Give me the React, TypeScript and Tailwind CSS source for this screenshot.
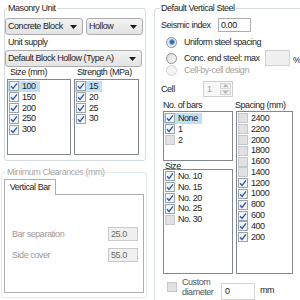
import React from "react";

const Check = ({ checked, disabled }: { checked?: boolean; disabled?: boolean }) => (
  <span
    className={`w-[10px] h-[10px] shrink-0 border flex items-center justify-center ${
      checked ? "border-[#9aa4ae] bg-[#f2f4f6]" : "border-[#c4c8cc] bg-[#e1e1e1]"
    } ${disabled ? "opacity-60" : ""}`}
  >
    {checked && (
      <svg width="8" height="8" viewBox="0 0 8 8">
        <path d="M1 4.3 L3 6.4 L7 1.3" stroke="#2c56a4" strokeWidth="1.3" fill="none" />
      </svg>
    )}
  </span>
);

const Item = ({ label, checked, sel }: { label: string; checked?: boolean; sel?: boolean }) => (
  <div className="h-[10.8px] flex items-center">
    <div className={`h-full flex items-center pl-[1px] pr-[4px] gap-[3px] ${sel ? "bg-[#bde0f7]" : ""}`}>
      <Check checked={checked} />
      <span className="leading-[11px] whitespace-nowrap">{label}</span>
    </div>
  </div>
);

const ListBox = ({ w, h, children }: { w: string; h: string; children: React.ReactNode }) => (
  <div className={`${w} ${h} border border-[#828790] bg-white pt-[1px] overflow-hidden`}>{children}</div>
);

const Combo = ({ w, label }: { w: string; label: string }) => (
  <div
    className={`${w} h-[17px] shrink-0 border border-[#acacac] rounded-[3px] bg-linear-to-b from-[#f3f3f3] to-[#e3e3e3] flex items-center justify-between pl-[2px] pr-[5px]`}
  >
    <span className="leading-[11px] whitespace-nowrap">{label}</span>
    <svg width="7" height="4" viewBox="0 0 7 4" className="shrink-0">
      <path d="M0 0 L7 0 L3.5 4 Z" fill="#1a1a1a" />
    </svg>
  </div>
);

const Radio = ({ checked, disabled }: { checked?: boolean; disabled?: boolean }) => (
  <span
    className={`w-[11px] h-[11px] shrink-0 rounded-full border flex items-center justify-center bg-linear-to-br ${
      disabled ? "border-[#d2d2d2] from-[#f0f0f0] to-[#f8f8f8]" : "border-[#8e9296] from-[#dcdcdc] to-[#f6f6f6]"
    }`}
  >
    {checked && (
      <span className="w-[6px] h-[6px] rounded-full bg-[#2566b0] border border-[#7fb1e3]" />
    )}
  </span>
);

const Legend = ({ children, cls }: { children: React.ReactNode; cls: string }) => (
  <span className={`absolute -top-[6px] bg-white px-[1px] leading-[11px] whitespace-nowrap ${cls}`}>{children}</span>
);

export default function App() {
  return (
    <div className="w-[300px] h-[300px] overflow-hidden bg-white text-[#1e1e1e] text-[9px] tracking-[-0.45px] leading-[11px] font-['Liberation_Sans',Arial,sans-serif] flex">
      {/* Left column */}
      <div className="w-[150px] shrink-0 flex flex-col pt-[8px]">
        {/* Masonry Unit */}
        <div className="relative ml-[4px] w-[142px] h-[153px] border border-[#d5dce2] rounded-[3px] flex flex-col">
          <Legend cls="left-[2px]">Masonry Unit</Legend>
          <div className="mt-[9px] flex gap-[3px]">
            <Combo w="w-[78px]" label="Concrete Block" />
            <Combo w="w-[57px]" label="Hollow" />
          </div>
          <div className="mt-[2px] pl-[3px]">Unit supply</div>
          <div className="mt-[2px]">
            <Combo w="w-[137px]" label="Default Block Hollow (Type A)" />
          </div>
          <div className="flex">
            <div className="ml-[2px] w-[64px] shrink-0 flex flex-col">
              <div className="pl-[3px]">Size (mm)</div>
              <div className="mt-[1px]">
                <ListBox w="w-[64px]" h="h-[76px]">
                  <Item label="100" checked sel />
                  <Item label="150" checked />
                  <Item label="200" checked />
                  <Item label="250" checked />
                  <Item label="300" checked />
                </ListBox>
              </div>
            </div>
            <div className="ml-[3px] w-[65px] shrink-0 flex flex-col">
              <div className="pl-[3px] whitespace-nowrap">Strength (MPa)</div>
              <div className="mt-[1px]">
                <ListBox w="w-[65px]" h="h-[76px]">
                  <Item label="15" checked sel />
                  <Item label="20" checked />
                  <Item label="25" checked />
                  <Item label="30" checked />
                </ListBox>
              </div>
            </div>
          </div>
        </div>

        {/* Minimum Clearances */}
        <div className="relative mt-[11px] ml-[1px] w-[146px] h-[126px] border border-[#e3e7ea] rounded-[3px] flex flex-col">
          <Legend cls="left-[4px] text-[#a6a6a6]">Minimum Clearances (mm)</Legend>
          <div className="mt-[6px] ml-[2px] relative z-10 w-[52px] h-[16px] border border-b-0 border-[#adadad] bg-white flex items-center justify-center">
            <span className="leading-[11px] whitespace-nowrap">Vertical Bar</span>
          </div>
          <div className="-mt-[1px] ml-[2px] w-[140px] h-[99px] border border-[#adadad] bg-white flex flex-col text-[#9a9a9a]">
            <div className="mt-[32px] h-[14px] flex items-center justify-between pl-[7px] pr-[5px]">
              <span className="whitespace-nowrap">Bar separation</span>
              <span className="w-[30px] h-[14px] shrink-0 border border-[#c9c9c9] bg-[#f0f0f0] text-[#6d6d6d] pl-[2px] flex items-center">25.0</span>
            </div>
            <div className="mt-[7px] h-[14px] flex items-center justify-between pl-[7px] pr-[5px]">
              <span className="whitespace-nowrap">Side cover</span>
              <span className="w-[30px] h-[14px] shrink-0 border border-[#c9c9c9] bg-[#f0f0f0] text-[#6d6d6d] pl-[2px] flex items-center">55.0</span>
            </div>
          </div>
        </div>
      </div>

      {/* Right column */}
      <div className="shrink-0 w-[200px] pt-[8px]">
        <div className="relative ml-[4px] w-[200px] h-[320px] border border-[#d5dce2] rounded-[3px] flex flex-col">
          <Legend cls="left-[5px]">Default Vertical Steel</Legend>
          <div className="mt-[9px] pl-[6px] flex items-center">
            <span className="w-[57px] shrink-0 whitespace-nowrap">Seismic index</span>
            <span className="w-[33px] h-[14px] shrink-0 border border-[#abadb3] bg-white pl-[2px] flex items-center">0.00</span>
          </div>
          <div className="mt-[4px] h-[12px] pl-[11px] flex items-center gap-[7px]">
            <Radio checked />
            <span className="whitespace-nowrap">Uniform steel spacing</span>
          </div>
          <div className="mt-[2px] h-[16px] pl-[11px] flex items-center">
            <Radio />
            <span className="ml-[7px] w-[81px] shrink-0 whitespace-nowrap">Conc. end steel: max</span>
            <span className="w-[25px] h-[16px] shrink-0 border border-[#d0d0d0] bg-[#f0f0f0]" />
            <span className="ml-[3px] mt-[5px] shrink-0 tracking-[-0.8px]">%</span>
          </div>
          <div className="-mt-[2px] h-[12px] pl-[11px] flex items-center gap-[7px] text-[#a3a3a3]">
            <Radio disabled />
            <span className="whitespace-nowrap">Cell-by-cell design</span>
          </div>
          <div className="mt-[5px] pl-[6px] flex items-center">
            <span className="w-[42px] shrink-0">Cell</span>
            <div className="w-[30px] h-[16px] shrink-0 border border-[#cfcfcf] bg-[#f7f7f7] flex items-center justify-between pl-[3px] pr-[1px] text-[#9c9c9c]">
              <span>1</span>
              <div className="w-[11px] h-[12px] flex flex-col gap-[1px]">
                <span className="flex-1 border border-[#d6d6d6] bg-[#f0f0f0] flex items-center justify-center">
                  <svg width="5" height="3" viewBox="0 0 5 3"><path d="M0 3 L5 3 L2.5 0 Z" fill="#b0b0b0" /></svg>
                </span>
                <span className="flex-1 border border-[#d6d6d6] bg-[#f0f0f0] flex items-center justify-center">
                  <svg width="5" height="3" viewBox="0 0 5 3"><path d="M0 0 L5 0 L2.5 3 Z" fill="#b0b0b0" /></svg>
                </span>
              </div>
            </div>
          </div>
          <div className="mt-[3px] ml-[8px] flex">
            <div className="w-[70px] shrink-0 flex flex-col">
              <div className="whitespace-nowrap">No. of bars</div>
              <ListBox w="w-[70px]" h="h-[50px]">
                <Item label="None" checked sel />
                <Item label="1" checked />
                <Item label="2" />
              </ListBox>
              <div className="pl-[2px]">Size</div>
              <div className="-mt-[3px]">
                <ListBox w="w-[70px]" h="h-[105px]">
                  <Item label="No. 10" checked />
                  <Item label="No. 15" checked />
                  <Item label="No. 20" checked />
                  <Item label="No. 25" checked />
                  <Item label="No. 30" />
                </ListBox>
              </div>
            </div>
            <div className="ml-[3px] w-[57px] shrink-0 flex flex-col">
              <div className="-ml-[1px] whitespace-nowrap">Spacing (mm)</div>
              <ListBox w="w-[57px]" h="h-[163px]">
                {[
                  ["2400", false],
                  ["2200", false],
                  ["2000", false],
                  ["1800", false],
                  ["1600", false],
                  ["1400", false],
                  ["1200", true],
                  ["1000", true],
                  ["800", true],
                  ["600", true],
                  ["400", true],
                  ["200", true],
                ].map(([l, c]) => (
                  <Item key={l as string} label={l as string} checked={c as boolean} />
                ))}
              </ListBox>
            </div>
          </div>
          <div className="mt-[3px] ml-[12px] flex items-start">
            <span className="mt-[5px]">
              <Check />
            </span>
            <div className="ml-[5px] w-[39px] shrink-0 flex flex-col leading-[10px] text-[#555]">
              <span>Custom</span>
              <span>diameter</span>
            </div>
            <span className="mt-[6px] w-[34px] h-[17px] shrink-0 border border-[#d5d5d5] bg-white pl-[3px] flex items-center">0</span>
            <span className="ml-[5px] mt-[8px]">mm</span>
          </div>
        </div>
      </div>
    </div>
  );
}
